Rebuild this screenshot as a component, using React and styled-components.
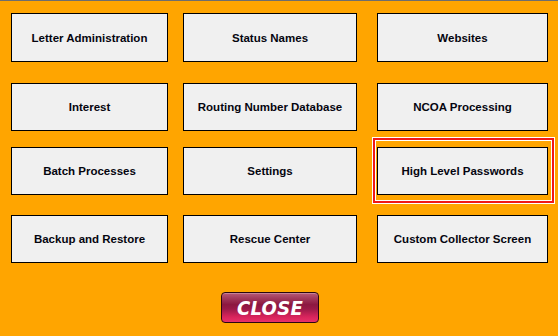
import React from 'react';
import styled, { createGlobalStyle } from 'styled-components';

const GlobalStyle = createGlobalStyle`
  html, body {
    margin: 0;
    padding: 0;
    background: #ffa500;
  }
`;

const Screen = styled.div`
  width: 558px;
  height: 336px;
  box-sizing: border-box;
  background: #ffa500;
  border-top: 1px solid #6e6e6e;
  display: flex;
  flex-direction: column;
  overflow: hidden;
`;

const Menu = styled.div`
  display: grid;
  grid-template-columns: 172px 194px 171px;
  grid-template-rows: 70px 64px 68px 48px;
  padding: 12px 0 0 11px;
`;

const Cell = styled.div`
  position: relative;
  justify-self: start;
  align-self: start;
`;

const MenuButton = styled.button`
  display: flex;
  align-items: center;
  justify-content: center;
  width: ${p => p.$w}px;
  height: ${p => p.$h}px;
  box-sizing: border-box;
  margin: 0;
  padding: 0;
  background: #f0f0f0;
  border: 1px solid #000;
  font-family: "Liberation Sans", Arial, sans-serif;
  font-weight: bold;
  font-size: 11.5px;
  color: #05050f;
  cursor: pointer;
`;

const FocusRing = styled.div`
  position: absolute;
  top: -10px;
  left: -5px;
  right: -7px;
  bottom: -9px;
  box-shadow: inset 0 0 0 1px #ffffff, inset 0 0 0 3px #f01818, inset 0 0 0 4px #ffffff;
  pointer-events: none;
`;

const Footer = styled.div`
  display: flex;
  padding: 29px 0 0 221px;
`;

const CloseButton = styled.button`
  width: 98px;
  height: 31px;
  box-sizing: border-box;
  padding: 1px 0 0;
  border: 1px solid #2a0610;
  border-radius: 4px;
  background: linear-gradient(
    to bottom,
    #b85a78 0%,
    #a23a5c 18%,
    #8c1840 40%,
    #9a1a48 55%,
    #d8245c 82%,
    #e8306a 100%
  );
  box-shadow: inset 0 1px 0 rgba(255, 255, 255, 0.25);
  color: #ffffff;
  font-family: "Comic Sans MS", "DejaVu Sans Condensed", "DejaVu Sans", sans-serif;
  font-stretch: condensed;
  font-weight: bold;
  font-style: italic;
  font-size: 20px;
  letter-spacing: 0.3px;
  line-height: 1;
  cursor: pointer;
`;

const items = [
  ['Letter Administration', 157, 49],
  ['Status Names', 174, 49],
  ['Websites', 171, 49],
  ['Interest', 157, 48],
  ['Routing Number Database', 174, 48],
  ['NCOA Processing', 171, 48],
  ['Batch Processes', 157, 48],
  ['Settings', 174, 48],
  ['High Level Passwords', 171, 48, true],
  ['Backup and Restore', 157, 48],
  ['Rescue Center', 174, 48],
  ['Custom Collector Screen', 171, 48],
];

export default function App() {
  return (
    <>
      <GlobalStyle />
      <Screen>
        <Menu>
          {items.map(([label, w, h, focused]) => (
            <Cell key={label}>
              {focused && <FocusRing />}
              <MenuButton $w={w} $h={h}>{label}</MenuButton>
            </Cell>
          ))}
        </Menu>
        <Footer>
          <CloseButton>CLOSE</CloseButton>
        </Footer>
      </Screen>
    </>
  );
}
